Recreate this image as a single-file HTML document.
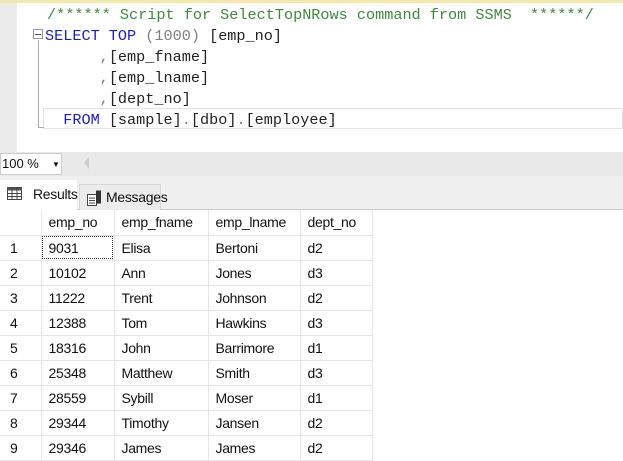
<!DOCTYPE html>
<html><head><meta charset="utf-8"><style>
*{margin:0;padding:0;box-sizing:border-box}
body{width:623px;height:459px;overflow:hidden;background:#fff;position:relative;font-family:"Liberation Sans",sans-serif}
.top{position:absolute;left:0;top:0;width:623px;height:3px;background:#f3e9b0}
.gutter{position:absolute;left:0;top:3px;width:17px;height:149px;background:#ececec}
.code{position:absolute;left:0;top:3px;font-family:"Liberation Mono",monospace;font-size:15.2px;white-space:pre;line-height:21px}
.code div{position:absolute;white-space:pre}
.c{color:#3c8a3c}.k{color:#1a1ad0}.g{color:#808080}.b{color:#222}
.box{position:absolute;left:33px;top:29px;width:10px;height:10px;border:1px solid #999;background:#fff}
.box:after{content:"";position:absolute;left:1px;top:3.5px;width:6px;height:1px;background:#555}
.vl{position:absolute;left:38px;top:40px;width:1px;height:88px;background:#aaa}
.hl{position:absolute;left:38px;top:127px;width:6px;height:1px;background:#aaa}
.curline{position:absolute;left:43px;top:108px;width:580px;height:21px;border:1px solid #e4e4e4}
.zbar{position:absolute;left:0;top:152px;width:623px;height:24px;background:#e9e9e9}
.zbox{position:absolute;left:0;top:153px;width:62px;height:22px;background:#fff;border:1px solid #ccc;font-size:13px;line-height:20px;padding-left:1px;color:#111}
.tabs{position:absolute;left:0;top:176px;width:623px;height:34px;background:#f0f0f0;border-bottom:1px solid #ccc}
.t1{position:absolute;left:0;top:180px;width:77px;height:31px;background:#fff;font-size:14px;line-height:28px;padding-left:33px;color:#111;letter-spacing:-0.3px}
.t2{position:absolute;left:79px;top:184px;width:82px;height:26px;background:#ececec;border:1px solid #d6d6d6;border-bottom:none;font-size:14px;line-height:24px;padding-left:26px;color:#111;letter-spacing:-0.3px}
table{position:absolute;left:0;top:210px;border-collapse:collapse;font-size:14px;color:#111}
td{height:25px;border-right:1px solid #e6e6e6;border-bottom:1px solid #e6e6e6;padding-left:7px;letter-spacing:-0.3px}
td:first-child{padding-left:10px}
.sel{outline:1px dotted #333;outline-offset:-2px}
</style></head><body>
<div class="top"></div>
<div class="gutter"></div>
<div class="curline"></div>
<div class="box"></div><div class="vl"></div><div class="hl"></div>
<div class="code">
<div style="left:47px;top:2px"><span class="c">/****** Script for SelectTopNRows command from SSMS  ******/</span></div>
<div style="left:45px;top:23px"><span class="k">SELECT TOP </span><span class="g">(1000) </span><span class="b">[emp_no]</span></div>
<div style="left:45px;top:44px"><span class="g">      ,</span><span class="b">[emp_fname]</span></div>
<div style="left:45px;top:65px"><span class="g">      ,</span><span class="b">[emp_lname]</span></div>
<div style="left:45px;top:86px"><span class="g">      ,</span><span class="b">[dept_no]</span></div>
<div style="left:45px;top:107px"><span class="k">  FROM </span><span class="b">[sample]</span><span class="g">.</span><span class="b">[dbo]</span><span class="g">.</span><span class="b">[employee]</span></div>
</div>
<div class="zbar"></div>
<div class="zbox">100 %<span style="position:absolute;font-size:8px;left:51px;top:1px">▼</span></div>
<div style="position:absolute;left:84px;top:157px;width:0;height:0;border-top:6px solid transparent;border-bottom:6px solid transparent;border-right:5px solid #ccc"></div>
<div class="tabs"></div>
<div class="t1"><svg style="position:absolute;left:7px;top:7px" width="15" height="13" viewBox="0 0 15 13"><rect x="0.5" y="0.5" width="14" height="12" fill="#fff" stroke="#444"/><rect x="0.5" y="0.5" width="14" height="3" fill="#555"/><path d="M5 0v13M10 0v13M0 6.5h15M0 9.5h15" stroke="#444"/></svg>Results</div>
<div class="t2"><svg style="position:absolute;left:7px;top:5px" width="15" height="16" viewBox="0 0 15 16"><rect x="0.5" y="4.5" width="9" height="11" fill="#fff" stroke="#444"/><path d="M2 8h6M2 10.5h6M2 13h6" stroke="#444"/><rect x="9" y="0.5" width="5" height="13" fill="#333"/></svg>Messages</div>
<table>
<tr><td style="width:41px"></td><td style="width:73px">emp_no</td><td style="width:94px">emp_fname</td><td style="width:92px">emp_lname</td><td style="width:72px">dept_no</td></tr>
<tr><td>1</td><td class="sel">9031</td><td>Elisa</td><td>Bertoni</td><td>d2</td></tr>
<tr><td>2</td><td>10102</td><td>Ann</td><td>Jones</td><td>d3</td></tr>
<tr><td>3</td><td>11222</td><td>Trent</td><td>Johnson</td><td>d2</td></tr>
<tr><td>4</td><td>12388</td><td>Tom</td><td>Hawkins</td><td>d3</td></tr>
<tr><td>5</td><td>18316</td><td>John</td><td>Barrimore</td><td>d1</td></tr>
<tr><td>6</td><td>25348</td><td>Matthew</td><td>Smith</td><td>d3</td></tr>
<tr><td>7</td><td>28559</td><td>Sybill</td><td>Moser</td><td>d1</td></tr>
<tr><td>8</td><td>29344</td><td>Timothy</td><td>Jansen</td><td>d2</td></tr>
<tr><td>9</td><td>29346</td><td>James</td><td>James</td><td>d2</td></tr>
</table>
</body></html>
